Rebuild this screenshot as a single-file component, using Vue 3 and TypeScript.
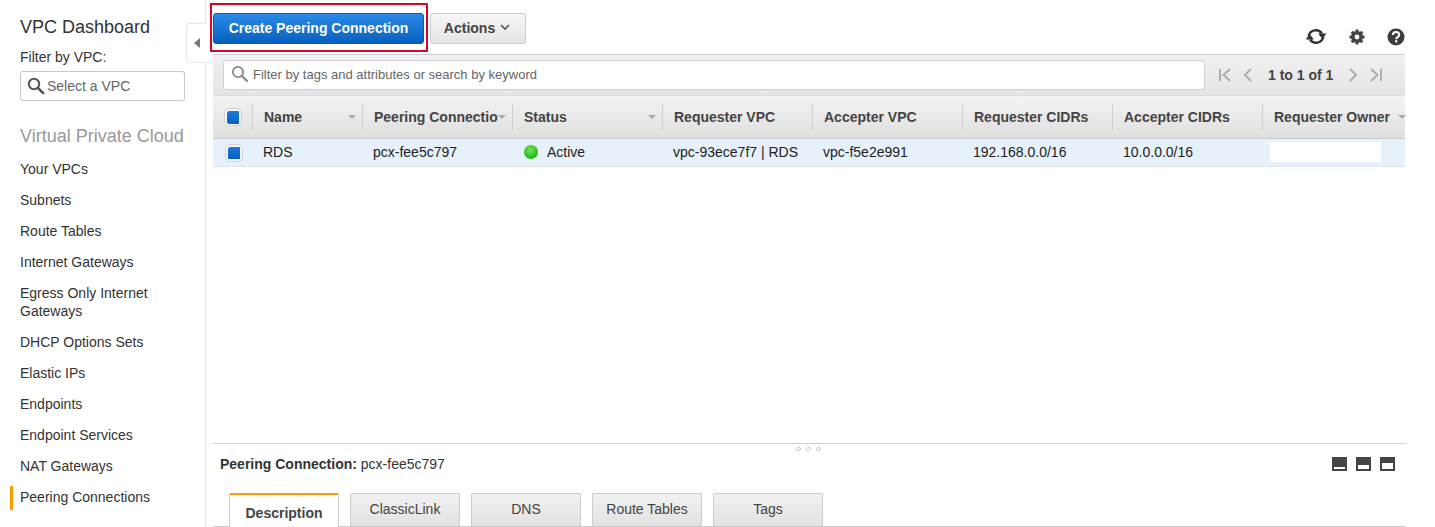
<script setup lang="ts">
const navItems: { label: string; active?: boolean }[] = [
  { label: 'Your VPCs' },
  { label: 'Subnets' },
  { label: 'Route Tables' },
  { label: 'Internet Gateways' },
  { label: 'Egress Only Internet Gateways' },
  { label: 'DHCP Options Sets' },
  { label: 'Elastic IPs' },
  { label: 'Endpoints' },
  { label: 'Endpoint Services' },
  { label: 'NAT Gateways' },
  { label: 'Peering Connections', active: true },
]
const columns: { label: string; sort?: boolean; tight?: boolean }[] = [
  { label: 'Name', sort: true },
  { label: 'Peering Connectio', sort: true },
  { label: 'Status', sort: true },
  { label: 'Requester VPC' },
  { label: 'Accepter VPC' },
  { label: 'Requester CIDRs' },
  { label: 'Accepter CIDRs' },
  { label: 'Requester Owner', sort: true, tight: true },
]
const tabs = ['Description', 'ClassicLink', 'DNS', 'Route Tables', 'Tags']
const paneFills = [2, 4, 6]
const gearTeeth = [0, 45, 90, 135, 180, 225, 270, 315]
</script>

<template>
  <div class="page">
    <aside class="sidebar">
      <h1 class="dash">VPC Dashboard</h1>
      <div class="filter-label">Filter by VPC:</div>
      <div class="vpc-select">
        <svg class="lens" width="18" height="18" viewBox="0 0 18 18">
          <circle cx="7" cy="7" r="5.2" fill="none" stroke="#555" stroke-width="2" />
          <path d="M11 11l5.2 5.2" stroke="#555" stroke-width="2.6" stroke-linecap="round" />
        </svg>
        <span>Select a VPC</span>
      </div>
      <h2 class="section">Virtual Private Cloud</h2>
      <nav class="nav">
        <a v-for="item in navItems" :key="item.label" class="nav-item" :class="{ active: item.active }">{{ item.label }}</a>
      </nav>
      <div class="collapse"><span class="collapse-arrow"></span></div>
    </aside>

    <main class="main">
      <div class="topbar">
        <button class="btn primary">Create Peering Connection</button>
        <button class="btn actions">
          Actions
          <svg width="10" height="7" viewBox="0 0 10 7"><path d="M1 1l4 4 4-4" fill="none" stroke="#555" stroke-width="1.6" /></svg>
        </button>
        <div class="top-icons">
          <svg width="22" height="19" viewBox="0 0 22 19">
            <path d="M3.6 9.500A7.400 7.400 0 0 1 17 6.500" fill="none" stroke="#333" stroke-width="2.300" />
            <path d="M13 6.500h8.500l-4.200 5.200z" fill="#333" />
            <path d="M18.400 9.500A7.400 7.400 0 0 1 5 12.500" fill="none" stroke="#333" stroke-width="2.300" />
            <path d="M.5 12.500H9L4.800 7.300z" fill="#333" />
          </svg>
          <svg width="16" height="16" viewBox="0 0 16 16">
            <circle cx="8" cy="8" r="4.200" fill="none" stroke="#444" stroke-width="3.600" />
            <rect v-for="a in gearTeeth" :key="a" x="6.500" y="0.500" width="3" height="3" fill="#444" :transform="`rotate(${a} 8 8)`" />
          </svg>
          <svg width="18" height="18" viewBox="0 0 18 18">
            <circle cx="9" cy="9" r="8.500" fill="#3d3d3d" />
            <path d="M5.900 6.900c0-4 6.300-3.900 6.300-.1 0 2.500-3 2.200-3 4.400" fill="none" stroke="#fff" stroke-width="2" />
            <rect x="8.100" y="12.200" width="2.200" height="2.200" fill="#fff" />
          </svg>
        </div>
      </div>

      <div class="filterbar">
        <div class="search">
          <svg width="18" height="18" viewBox="0 0 18 18">
            <circle cx="7" cy="7" r="5.200" fill="none" stroke="#8a8a8a" stroke-width="1.800" />
            <path d="M11 11l5 5" stroke="#8a8a8a" stroke-width="2.400" stroke-linecap="round" />
          </svg>
          <span>Filter by tags and attributes or search by keyword</span>
        </div>
        <div class="pager">
          <svg width="12" height="14" viewBox="0 0 12 14"><path d="M1 1v12M11 1L4.500 7l6.500 6" fill="none" stroke="#adadad" stroke-width="2" /></svg>
          <svg class="prev" width="9" height="14" viewBox="0 0 9 14"><path d="M8 1L2 7l6 6" fill="none" stroke="#adadad" stroke-width="2" /></svg>
          <span class="pg-text">1 to 1 of 1</span>
          <svg class="next" width="9" height="14" viewBox="0 0 9 14"><path d="M1 1l6 6-6 6" fill="none" stroke="#adadad" stroke-width="2" /></svg>
          <svg width="12" height="14" viewBox="0 0 12 14"><path d="M11 1v12M1 1l6.500 6L1 13" fill="none" stroke="#adadad" stroke-width="2" /></svg>
        </div>
      </div>

      <div class="row head">
        <div class="cell check"><span class="checkbox"></span></div>
        <div v-for="col in columns" :key="col.label" class="cell th" :class="{ tight: col.tight }">
          <span class="th-label">{{ col.label }}</span>
          <span v-if="col.sort" class="sort"></span>
        </div>
      </div>
      <div class="row body">
        <div class="cell check"><span class="checkbox nudged"></span></div>
        <div class="cell td">RDS</div>
        <div class="cell td">pcx-fee5c797</div>
        <div class="cell td"><span class="dot"></span>Active</div>
        <div class="cell td">vpc-93ece7f7 | RDS</div>
        <div class="cell td">vpc-f5e2e991</div>
        <div class="cell td">192.168.0.0/16</div>
        <div class="cell td">10.0.0.0/16</div>
        <div class="cell td"><span class="masked"></span></div>
      </div>

      <div class="spacer"></div>

      <section class="detail">
        <div class="grip"><i></i><i></i><i></i></div>
        <div class="detail-head">
          <div class="detail-title"><b>Peering Connection:</b> pcx-fee5c797</div>
          <div class="panes">
            <span v-for="h in paneFills" :key="h" class="pane"><i :style="{ height: h + 'px' }"></i></span>
          </div>
        </div>
        <div class="tabs">
          <div v-for="(tab, i) in tabs" :key="tab" class="tab" :class="{ current: i === 0 }">{{ tab }}</div>
        </div>
      </section>
    </main>

    <div class="highlight"></div>
  </div>
</template>

<style>
html, body { margin: 0; background: #fff; }
</style>

<style scoped>
.page {
  position: relative;
  display: flex;
  width: 1435px;
  height: 527px;
  overflow: hidden;
  font-family: "Liberation Sans", Arial, sans-serif;
  font-size: 14px;
  color: #333;
  background: #fff;
}
.sidebar {
  position: relative;
  box-sizing: border-box;
  width: 206px;
  flex: none;
  padding: 16px 0 0 20px;
  border-right: 1px solid #e6e6e6;
}
.dash {
  margin: 0;
  font-size: 18px;
  font-weight: 400;
  line-height: 22px;
  color: #333;
}
.filter-label {
  margin-top: 10px;
  line-height: 18px;
  color: #333;
}
.vpc-select {
  box-sizing: border-box;
  display: flex;
  align-items: center;
  gap: 2px;
  width: 165px;
  height: 30px;
  margin-top: 5px;
  padding-left: 6px;
  border: 1px solid #c8c8c8;
  border-radius: 3px;
  color: #666;
}
.section {
  margin: 24px 0 0;
  font-size: 18px;
  font-weight: 400;
  line-height: 22px;
  color: #999;
}
.nav {
  display: flex;
  flex-direction: column;
  gap: 13px;
  margin-top: 13px;
}
.nav-item {
  position: relative;
  width: 150px;
  line-height: 18px;
  color: #333;
}
.nav-item.active::before {
  content: "";
  position: absolute;
  left: -10px;
  top: -2px;
  width: 3px;
  height: 24px;
  background: #f90;
}
.collapse {
  position: absolute;
  left: 186px;
  top: 23px;
  box-sizing: border-box;
  width: 20px;
  height: 40px;
  background: #fff;
  border: 1px solid #e6e6e6;
  border-right: 0;
  border-radius: 4px 0 0 4px;
}
.collapse-arrow {
  position: absolute;
  left: 7px;
  top: 14px;
  border-style: solid;
  border-width: 5.500px 6px 5.500px 0;
  border-color: transparent #777 transparent transparent;
}
.main {
  display: flex;
  flex-direction: column;
  flex: 1;
  min-width: 0;
  padding: 0 30px 0 7px;
}
.topbar {
  position: relative;
  display: flex;
  align-items: flex-start;
  gap: 6px;
  height: 54px;
  padding-top: 13px;
  box-sizing: border-box;
}
.btn {
  box-sizing: border-box;
  height: 31px;
  border-radius: 3px;
  font-family: inherit;
  font-size: 14px;
  font-weight: 700;
  padding: 0 0 2px;
}
.primary {
  width: 211px;
  color: #fff;
  border: 1px solid #0a5cb0;
  background: linear-gradient(#2b8ae6, #0760bf);
}
.actions {
  display: flex;
  align-items: center;
  justify-content: center;
  gap: 5px;
  width: 96px;
  padding-right: 2px;
  color: #444;
  border: 1px solid #ccc;
  background: linear-gradient(#f6f6f6, #e4e4e4);
}
.top-icons {
  position: absolute;
  right: 0;
  top: 27px;
  display: flex;
  align-items: center;
  gap: 22px;
}
.filterbar {
  display: flex;
  align-items: center;
  box-sizing: border-box;
  height: 42px;
  padding: 0 0 0 10px;
  border-top: 1px solid #ccc;
  border-bottom: 1px solid #ddd;
  background: linear-gradient(#f1f1f1, #e4e4e4);
}
.search {
  box-sizing: border-box;
  display: flex;
  align-items: center;
  gap: 4px;
  width: 982px;
  height: 30px;
  padding: 0 0 2px 7px;
  font-size: 13px;
  color: #666;
  background: #fff;
  border: 1px solid #d0d0d0;
  border-radius: 3px;
}
.pager {
  display: flex;
  align-items: center;
  margin-left: 14px;
}
.prev { margin-left: 12px; }
.next { margin-right: 12px; }
.pg-text {
  margin: 0 16px;
  font-weight: 700;
  color: #444;
}
.row {
  display: grid;
  grid-template-columns: 40px 110px 150px 150px 150px 150px 150px 150px 142px;
  overflow: hidden;
}
.head {
  height: 43px;
  align-items: center;
  border-bottom: 1px solid #c8c8c8;
  box-sizing: border-box;
  background: linear-gradient(#f3f3f3, #dfdfdf);
}
.body {
  height: 28px;
  align-items: center;
  box-sizing: border-box;
  padding-bottom: 2px;
  background: #e6f1fc;
  border-bottom: 1px solid #dde5ee;
}
.cell {
  display: flex;
  align-items: center;
  min-width: 0;
  white-space: nowrap;
}
.check { justify-content: center; }
.checkbox {
  box-sizing: border-box;
  width: 18px;
  height: 18px;
  margin-left: -1px;
  padding: 1.500px;
  background: linear-gradient(#1a7ae0, #0a5fbd) content-box, #f4f4f4;
  border: 1px solid #d2d2d2;
  border-radius: 5px;
}
.checkbox.nudged { margin: 2px 0 0 1px; }
.th {
  position: relative;
  height: 26px;
  margin-left: -1px;
  padding-left: 11px;
  border-left: 1px solid #cfcfcf;
  font-weight: 700;
  color: #444;
}
.th-label { flex: 1; }
.sort {
  flex: none;
  width: 0;
  height: 0;
  margin-right: 7px;
  border-style: solid;
  border-width: 4px 4px 0;
  border-color: #aaa transparent transparent;
}
.th.tight .sort { margin-right: -1px; }
.td {
  padding-left: 10px;
  color: #222;
}
.dot {
  width: 14px;
  height: 14px;
  margin: 0 9px 0 1px;
  border-radius: 50%;
  background: radial-gradient(circle at 45% 35%, #6fe65a, #1fb30e 75%);
}
.masked {
  display: block;
  width: 111px;
  height: 20px;
  margin-left: -3px;
  background: #fff;
}
.spacer { flex: 1; }
.detail {
  position: relative;
  border-top: 1px solid #d0d0d0;
}
.grip {
  position: absolute;
  left: 583px;
  top: 3px;
  display: flex;
  gap: 5px;
}
.grip i {
  box-sizing: border-box;
  width: 5px;
  height: 4px;
  border: 1px solid #ccc;
  border-radius: 2px;
}
.detail-head {
  display: flex;
  align-items: center;
  justify-content: space-between;
  height: 39px;
  padding: 0 10px 0 7px;
}
.detail-title { font-size: 14px; color: #333; }
.panes { display: flex; gap: 9px; }
.pane {
  position: relative;
  width: 15px;
  height: 14px;
  background: #444;
}
.pane i {
  position: absolute;
  left: 2px;
  right: 2px;
  bottom: 2px;
  background: #fff;
}
.tabs {
  display: flex;
  gap: 11px;
  height: 34px;
  margin-top: 10px;
  padding-left: 16px;
  border-bottom: 1px solid #ccc;
  box-sizing: border-box;
}
.tab {
  box-sizing: border-box;
  width: 110px;
  height: 33px;
  line-height: 31px;
  text-align: center;
  color: #444;
  border: 1px solid #ccc;
  border-bottom: 0;
  border-radius: 2px 2px 0 0;
  background: linear-gradient(#f1f1f1, #e2e2e2);
}
.tab.current {
  height: 34px;
  line-height: 36px;
  font-weight: 700;
  background: #fff;
  border-top: 2px solid #f90;
}
.highlight {
  position: absolute;
  left: 210px;
  top: 3px;
  box-sizing: border-box;
  width: 218px;
  height: 49px;
  border: 2px solid #d9042b;
  pointer-events: none;
}
</style>
